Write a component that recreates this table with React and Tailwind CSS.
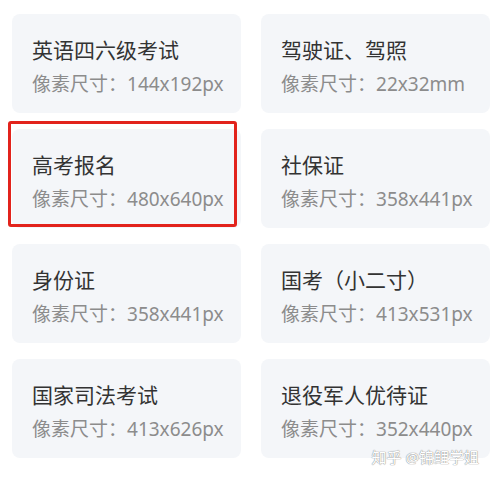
const items = [
  { title: "英语四六级考试", size: "144x192px" },
  { title: "驾驶证、驾照", size: "22x32mm" },
  { title: "高考报名", size: "480x640px", marked: true },
  { title: "社保证", size: "358x441px" },
  { title: "身份证", size: "358x441px" },
  { title: "国考（小二寸）", size: "413x531px" },
  { title: "国家司法考试", size: "413x626px" },
  { title: "退役军人优待证", size: "352x440px" },
];

function Card({ item }) {
  return (
    <div className="relative h-[99px] rounded-lg bg-[#f4f6f9] pl-[20px] pt-[22px]">
      <div className="text-[21px] leading-[28px] text-[#333]">{item.title}</div>
      <div className="mt-[7px] text-[19px] leading-[26px] text-[#8c8c8c]">
        像素尺寸：{item.size}
      </div>
      {item.marked && (
        <div className="absolute left-[-4px] top-[-8px] h-[106px] w-[229px] rounded-[3px] border-[3px] border-[#e2231c]" />
      )}
    </div>
  );
}

export default function App() {
  return (
    <div
      className="relative h-[479px] w-[491px] bg-white pl-[12px] pr-[1px] pt-[14px]"
      style={{ fontFamily: '"Noto Sans", "Noto Sans CJK SC", sans-serif' }}
    >
      <div className="grid grid-cols-2 gap-x-[20px] gap-y-[16px]">
        {items.map((item, i) => (
          <Card key={i} item={item} />
        ))}
      </div>
      <div className="absolute right-[12px] top-[447px] text-[15px] leading-[20px] text-white [text-shadow:0_0_1px_#8a8a8a,0_0_1px_#8a8a8a]">
        知乎 @锦鲤学姐
      </div>
    </div>
  );
}
